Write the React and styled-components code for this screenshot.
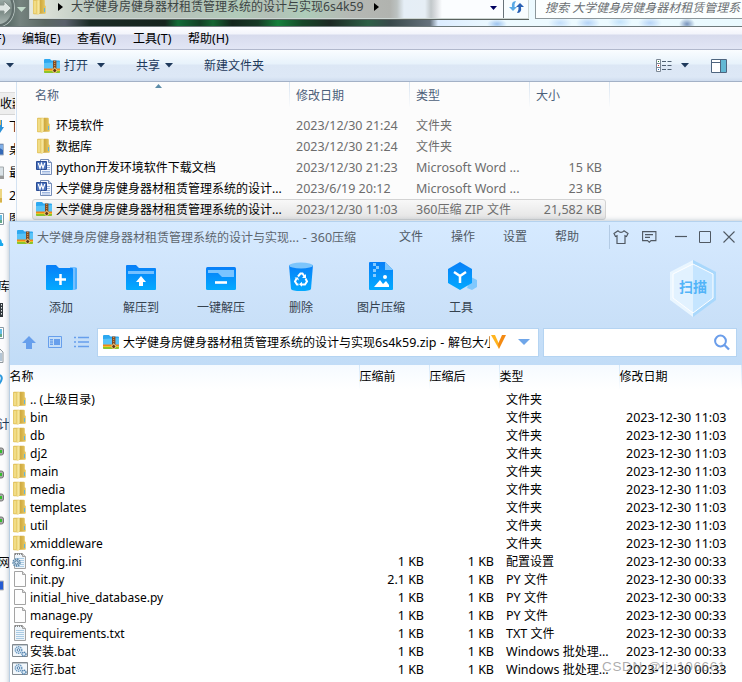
import React from "react";
import styled, { createGlobalStyle } from "styled-components";

const Global = createGlobalStyle`
  * { box-sizing: border-box; }
  body { margin: 0; overflow: hidden; background: #fcfcfc; }
  #root { font: 12px/18px "Noto Sans", "Noto Sans CJK SC", sans-serif; color: #000; }
  svg { display: block; flex: none; }
`;

const Latin = styled.span`font-size: ${(p) => p.$s}px;`;
const Mixed = ({ children, size = 12.5 }) =>
  String(children)
    .split(/([\u3400-\u9fff]+)/)
    .map((p, i) => (i % 2 ? <React.Fragment key={i}>{p}</React.Fragment> : p ? <Latin $s={size} key={i}>{p}</Latin> : null));

const Desktop = styled.div`
  position: relative; width: 742px; height: 682px; overflow: hidden; background: #fcfcfc;
`;
const Explorer = styled.div`display: flex; flex-direction: column; height: 682px;`;

/* glass title area */
const Glass = styled.div`
  height: 27px; flex: none; display: flex; align-items: flex-start; overflow: hidden;
  border-bottom: 1px solid #6f7a7c;
  background:
    radial-gradient(ellipse 10px 5px at 497px 24px, #9dc3ef 0, transparent 100%),
    radial-gradient(ellipse 12px 6px at 560px 23px, #c3defa 0, transparent 100%),
    radial-gradient(ellipse 12px 6px at 588px 23px, #b4d3f7 0, transparent 100%),
    radial-gradient(ellipse 12px 6px at 620px 22px, #c3e2fa 0, transparent 100%),
    radial-gradient(ellipse 12px 6px at 650px 23px, #b7d4f7 0, transparent 100%),
    radial-gradient(ellipse 8px 6px at 687px 24px, #7894bd 0, transparent 100%),
    linear-gradient(90deg, #475b56 0, #75837f 20px, #5b6863 45px, #59606b 65px, #1b2c25 90px, #16251f 165px, #126b37 178px, #143f26 200px, #156532 213px, #13251c 232px, #173a26 258px, #15803b 278px, #164829 302px, #1d2924 330px, #2e6046 368px, #39494b 390px, #66727d 430px, #dcecff 438px, #edfaff 500px, #eafaff 742px);
`;
const BackRound = styled.div`
  width: 30px; height: 36px; margin: -10px 0 0 -16px; flex: none; border-radius: 50%;
  border: 2px solid #5f6d6b; background: linear-gradient(#b7c7c3, #74847f 55%, #a9b6b2);
  box-shadow: 0 0 0 1px #b6c2bf; display: flex; align-items: center; justify-content: flex-end;
`;
const NavDrop = styled.div`
  width: 15px; height: 18px; flex: none; display: flex; align-items: center; justify-content: center;
`;
const AddressBar = styled.div`
  height: 19px; width: 500px; flex: none; display: flex; align-items: flex-start;
  border: 1px solid #cdd6d3; border-top: 0; box-shadow: 0 1px 0 #59615e; color: #3d4444;
  background: linear-gradient(90deg, #e6e9df 0, #bcc9c0 60px, #b6c2b9 150px, #b1cbb9 210px, #b4bfb6 240px, #aecdb9 275px, #b5b8b4 320px, #b1b3af 360px, #bcc2c1 367px, #e5eef6 374px, #e6eef5 395px, #c2c8ca 401px, #d6d9dc 405px, #fbfdff 412px);
`;
const Crumb = styled.div`line-height: 17px; margin-top: -2px; white-space: nowrap; flex: none;`;
const CrumbSlot = styled.div`width: ${(p) => p.$w}px; height: 14px; display: flex; align-items: center; justify-content: center; flex: none;`;
const HistoryDrop = styled.div`flex: 1; height: 15px; padding-right: 6px; display: flex; align-items: center; justify-content: flex-end;`;
const Refresh = styled.div`
  width: 25px; height: 18px; border-left: 1px solid #68737a; flex: none;
  display: flex; justify-content: center; background: #f8fdff;
`;
const FindBar = styled.div`
  margin-left: 6px; width: 222px; height: 19px; padding-left: 9px; flex: none; overflow: hidden;
  border: 1px solid #8c979b; border-top: 0; background: #fcffff; color: #6b7073;
  font-style: italic; line-height: 15px; white-space: nowrap;
`;
const MenuBar = styled.div`
  height: 23px; flex: none; border-bottom: 1px solid #b1b8cc; display: flex; align-items: center;
  background: linear-gradient(#fdfdff 0, #f2f4fb 7px, #d7dbed 8px, #e2e6f5 22px);
`;
const MenuItem = styled.div`width: ${(p) => p.$w}px; margin-left: ${(p) => p.$x || 0}px; flex: none; white-space: nowrap; line-height: 22px; padding-top: 1px;`;
const Toolbar = styled.div`
  height: 32px; flex: none; border-bottom: 1px solid #a3b1c6; display: flex; align-items: center; color: #1e395b;
  background: linear-gradient(#fafdff 0, #e7f2fb 14px, #dce7f5 15px, #dde8f6 27px, #cfdcee 31px);
`;
const ToolSlot = styled.div`width: ${(p) => p.$w}px; padding-left: ${(p) => p.$pl || 0}px; flex: none; display: flex; align-items: center; white-space: nowrap;`;
const Body = styled.div`flex: 1; display: flex; min-height: 0;`;
const NavPane = styled.div`
  width: 17px; flex: none; border-right: 1px solid #d3e2f2; overflow: hidden; background: #fcfcfd; padding-top: 10px;
`;
const NavHead = styled.div`
  height: 23px; line-height: 22px; white-space: nowrap; overflow: hidden; width: 15px;
  border-top: 1px solid #ddd; border-bottom: 1px solid #d5d5d5; background: #eee;
`;
const NavRow = styled.div`
  height: 23px; display: flex; align-items: center; margin-top: ${(p) => p.$gap || 0}px; width: 15px; overflow: hidden;
  svg { width: 9px; }
`;
const NavText = styled.div`
  width: 12px; flex: none; white-space: nowrap; margin-left: ${(p) => p.$x || 0}px; color: ${(p) => p.$c || "#000"};
`;
const FilePane = styled.div`flex: 1; min-width: 0; padding-left: 15px;`;
const FileHead = styled.div`
  height: 27px; display: grid; grid-template-columns: 258px 120px 120px 80px; color: #4c607a;
`;
const FileHeadCell = styled.div`
  height: 25px; line-height: 28px; padding-left: ${(p) => p.$pl || 6}px;
  border-right: 1px solid; border-image: linear-gradient(#d5e2f0, #fcfcfc) 1;
  position: relative;
`;
const SortMark = styled.div`position: absolute; left: 123px; top: 2px;`;
const FileRows = styled.div`padding-top: 6px;`;
const FileRow = styled.div`
  height: 21px; width: 574px; display: grid; grid-template-columns: 23px 240px 120px 110px 76px;
  line-height: 20px; color: #6d6d6d; border: 1px solid ${(p) => (p.$sel ? "#d3d3d3" : "transparent")}; border-radius: 3px;
  background: ${(p) => (p.$sel ? "linear-gradient(#f8f8f8,#e4e4e4)" : "none")};
  white-space: nowrap;
`;
const FileIcon = styled.div`padding: 1px 0 0 3px;`;
const FileName = styled.div`color: #000; width: 232px; height: 19px; overflow: hidden;`;
const Size = styled.div`text-align: right;`;

/* archive window */
const Archive = styled.div`
  position: absolute; left: 9px; top: 221px; width: 740px; height: 470px; background: #fff;
  border-left: 1px solid #b9cfe4; border-top: 1px solid #b5d2ee; box-shadow: 0 0 5px rgba(60,90,120,.4);
`;
const ArchiveTop = styled.div`
  height: 143px; background: linear-gradient(#d6eaff 0, #d0e5fc 45px, #c9e0f8 100px, #c1dcf7 143px);
`;
const TitleBar = styled.div`height: 30px; display: flex; color: #5d666f; white-space: nowrap;`;
const TitleIcon = styled.div`width: 27px; padding: 7px 0 0 7px; flex: none;`;
const TitleText = styled.div`width: 362px; line-height: 31px; flex: none; word-spacing: .5px;`;
const TitleMenu = styled.div`width: 52px; line-height: 29px; flex: none; color: #4f5964;`;
const TitleTools = styled.div`
  height: 24px; margin-top: 3px; margin-left: 2px; border-left: 1px solid #b3cbe5; display: flex; align-items: center;
`;
const TitleTool = styled.div`width: ${(p) => p.$w}px; flex: none;`;
const Actions = styled.div`height: 74px; display: flex; padding-left: 11px;`;
const Action = styled.div`
  width: 80px; flex: none; display: flex; flex-direction: column; align-items: center; padding-top: 10px; color: #35424f;
`;
const ActionLabel = styled.div`margin-top: 5px; line-height: 18px;`;
const ScanBadge = styled.div`margin: 5px 0 0 165px; position: relative; width: 54px; height: 64px;`;
const ScanText = styled.div`
  position: absolute; inset: 0; text-align: center; font: bold 14px/58px "Noto Sans CJK SC", sans-serif; color: #52b4f8;
`;
const AddressRow = styled.div`height: 30px; display: flex; align-items: center; margin-top: 1px;`;
const SmallTools = styled.div`width: 87px; flex: none; display: flex; gap: 12px; padding-left: 12px; align-items: center;`;
const PathBox = styled.div`
  width: 442px; height: 29px; border: 1px solid #b5d4f2; background: #fff; display: flex; align-items: center; padding-left: 5px; flex: none;
`;
const PathText = styled.div`width: 367px; margin-left: 4px; overflow: hidden; white-space: nowrap; flex: none; padding-top: 1px; word-spacing: .5px;`;
const PathDrop = styled.div`margin-left: 12px;`;
const FindBox = styled.div`
  width: 194px; height: 29px; margin-left: 4px; border: 1px solid #b5d4f2; background: #fff;
  display: flex; align-items: center; justify-content: flex-end; padding-right: 5px;
`;
const ListHead = styled.div`
  height: 24px; display: grid; grid-template-columns: 350px 70px 70px 120px 122px; line-height: 24px;
  background: linear-gradient(#f5faff, #fff);
`;
const ListHeadCell = styled.div`
  border-right: 1px solid; border-image: linear-gradient(#d0e6fa, #fff) 1; white-space: nowrap; text-indent: -.5px;
`;
const List = styled.div`padding-top: 2px;`;
const Item = styled.div`
  height: 18px; line-height: 18px; display: grid; grid-template-columns: 20px 314px 80px 70px 12px 120px 102px; white-space: nowrap;
`;
const ItemIcon = styled.div`padding-left: 2px;`;
const Right = styled.div`text-align: right;`;
const Watermark = styled.div`
  position: absolute; left: 602px; top: 658px; font: 13.5px/18px "Liberation Sans", sans-serif; letter-spacing: .65px; color: rgba(120,120,120,.62); white-space: nowrap;
`;

const Caret = ({ c = "#1e395b", w = 8, h = 4.5 }) => (
  <svg width={w} height={h}><path d={`M0 0H${w}L${w / 2} ${h}Z`} fill={c} /></svg>
);
const Play = () => <svg width="5" height="8"><path d="M0 0L5 4L0 8Z" fill="#000" /></svg>;

const Folder = () => (
  <svg width="16" height="16" viewBox="0 0 16 16">
    <defs>
      <linearGradient id="leaf"><stop offset="0" stopColor="#ecd271" /><stop offset=".6" stopColor="#f8eaa4" /><stop offset="1" stopColor="#cfa93c" /></linearGradient>
      <linearGradient id="back"><stop offset="0" stopColor="#c9a136" /><stop offset="1" stopColor="#e8ca66" /></linearGradient>
    </defs>
    <path d="M7 1.500q0-.7.8-.7h4q1 0 1 1v4.500l1 .7v7q0 .7-.8.7H7z" fill="url(#back)" />
    <path d="M1 1.800q0-1 1-1h5v14.400H2q-1 0-1-1z" fill="#dfbf5a" />
    <path d="M1.600 1.800h2.600v12.600H1.600z" fill="#f1dc85" />
    <path d="M4.400 1.600L8.600.9v12.500l-3 2.400-1.200-.8z" fill="url(#leaf)" />
    <path d="M12 9h1v4h-1z" fill="#63b4dc" />
  </svg>
);
const Zip = () => (
  <svg width="16" height="16" viewBox="0 0 16 16">
    <path d="M0 2q0-1 1-1h5l1.5 1.5H15q1 0 1 1V11H0z" fill="#2da8f0" /><path d="M0 5l16-1v7H0z" fill="#58c3f8" />
    <path d="M0 10.5h16V13H0z" fill="#f28618" /><path d="M0 12.5h16v1.7q0 .8-.8.8H.8q-.8 0-.8-.8z" fill="#8cc42a" /><path d="M0 12h16v1H0z" fill="#ecc228" />
    <path d="M9 2.5h3.4V13H9z" fill="#824b24" /><path d="M10.7 3v8" stroke="#e3a356" strokeDasharray="1 1" />
    <circle cx="10.7" cy="12.5" r="2" fill="#5b3515" stroke="#f7ce80" />
  </svg>
);
const Word = () => (
  <svg width="17" height="16" viewBox="0 0 17 16">
    <path d="M4.5.5h8l3 3v12h-11z" fill="#f4f8ff" stroke="#758db8" /><path d="M12.5.5v3h3" fill="#cbd8ef" stroke="#758db8" />
    <path d="M6 12.5h8M6 14h8M11 6.5h3M11 8.5h3M11 10.5h3" stroke="#9db5dd" />
    <path d="M.5 2.5h10v8H.5z" fill="#4a72bd" stroke="#2a4b93" /><path d="M2.3 4L4 9L5.5 4.5L7 9L8.8 4" fill="none" stroke="#fff" strokeWidth="1.2" />
  </svg>
);
const Page = ({ kind }) => (
  <svg width="16" height="16" viewBox="0 0 16 16">
    <path d="M2.5.5h8l3 3v12h-11z" fill={kind ? "#eef5fb" : "#fdfdfd"} stroke="#a3a3a3" /><path d="M10.5.5v3h3" fill="#ddd" stroke="#a3a3a3" />
    {kind && <path d="M4 5.5h8M4 7.5h8M4 9.5h8M4 11.5h8M4 13.5h8" stroke="#aacbe3" />}
    {kind && <path d="M3 1h8" stroke="#888" strokeDasharray="1 1" strokeWidth="2" />}
    {kind === "ini" && <><circle cx="4.5" cy="9.5" r="3.4" fill="#d5e8f5" stroke="#5c86a8" strokeWidth="1.7" strokeDasharray="1.5 .8" /><circle cx="4.5" cy="9.5" r="1.8" fill="none" stroke="#496f91" /></>}
  </svg>
);
const Bat = () => (
  <svg width="16" height="16" viewBox="0 0 16 16">
    <path d="M.5 1.5h15v12H.5z" fill="#f2f7fb" stroke="#82898f" /><path d="M1 2.5h14" stroke="#c0cad1" />
    <circle cx="6.5" cy="7" r="3.3" fill="#e0eef8" stroke="#6c98bf" strokeWidth="1.4" strokeDasharray="1.4 .7" /><circle cx="6.5" cy="7" r="1.3" fill="#fff" stroke="#4d7cab" />
    <circle cx="12" cy="11.2" r="2" fill="#dceaf5" stroke="#477aa9" strokeWidth="1.3" strokeDasharray="1.2 .5" />
  </svg>
);
const Gradient = () => (
  <defs><linearGradient id="blue" x1="0" y1="0" x2="0" y2="1"><stop offset="0" stopColor="#087ff8" /><stop offset="1" stopColor="#03aaff" /></linearGradient></defs>
);
const actionArt = {
  add: <><path d="M25 4h5q2 0 2 2v19q0 2-2 2h-5z" fill="#75bfff" /><path d="M1 3q0-1 1-1h9l3 3h13q1 0 1 1v20q0 1-1 1H2q-1 0-1-1z" fill="url(#blue)" /><path d="M31 5v21" stroke="#249bfb" strokeWidth="1" /><path d="M15.5 11v11M10 16.5h11" stroke="#fff" strokeWidth="2.5" /></>,
  out: <><path d="M1 3q0-1 1-1h9l3 3h16q1 0 1 1v20q0 1-1 1H2q-1 0-1-1z" fill="url(#blue)" /><path d="M3 8h26v3H3z" fill="#74c0ff" /><path d="M16 13l5 6h-3v4h-4v-4h-3z" fill="#fff" /></>,
  one: <><rect x="1" y="4" width="30" height="23" rx="1.5" fill="url(#blue)" /><path d="M3 7h26v7H17l-4-4H3z" fill="#7ac4ff" /><path d="M10 19.5h12" stroke="#fff" strokeWidth="2.6" /></>,
  del: <><path d="M4 2h24l-2 24q-1 2-10 2T6 26z" fill="url(#blue)" /><ellipse cx="16" cy="2.5" rx="12" ry="3" fill="#7cc5fc" /><g fill="none" stroke="#fff" strokeWidth="2"><path d="M13 13.5l2.5-3h2l2 3M20.5 15.5l1.5 3-2 3h-3M13.5 21.5H12l-2-3 1.5-3" /></g><path d="M21 11v4h-4zM17 18.7v5l-3-2.4zM9.5 14.5l3.5 0 1 3z" fill="#fff" /></>,
  img: <><path d="M5-1h15l8 8v19q0 1-1 1H5q-1 0-1-1V0q0-1 1-1z" fill="url(#blue)" /><path d="M20-1v8h8z" fill="#7dc6ff" /><path d="M8 0h3v3H8zM11 3h3v3h-3zM8 6h3v3H8zM8 11h3v3H8z" fill="#86cbff" /><path d="M9 24l6-7 3 4 3-3 3 4v2z" fill="#fff" /><circle cx="20" cy="14" r="2" fill="#fff" /></>,
  hex: <><path d="M26 14l6 3v7l-5 3-5-2z" fill="#80c8fd" /><path d="M15-1l12 7v14l-12 7-12-7V6z" fill="url(#blue)" /><path d="M9 9l6 4 6-4M15 13v7" fill="none" stroke="#fff" strokeWidth="2.5" /></>,
};
const ActionIcon = ({ kind }) => (
  <svg width="32" height="32" viewBox="0 -1 32 32" overflow="visible"><Gradient />{actionArt[kind]}</svg>
);
const Glyph = ({ w, h = w, c = "#505963", children }) => (
  <svg width={w} height={h} viewBox={`0 0 ${w} ${h}`} fill="none" stroke={c}>{children}</svg>
);

const files = [
  [Folder, "环境软件", "2023/12/30 21:24", "文件夹", ""],
  [Folder, "数据库", "2023/12/30 21:24", "文件夹", ""],
  [Word, "python开发环境软件下载文档", "2023/12/30 21:23", "Microsoft Word ...", "15 KB"],
  [Word, "大学健身房健身器材租赁管理系统的设计...", "2023/6/19 20:12", "Microsoft Word ...", "23 KB"],
  [Zip, "大学健身房健身器材租赁管理系统的设计...", "2023/12/30 11:03", "360压缩 ZIP 文件", "21,582 KB"],
];
const items = [
  ["dir", ".. (上级目录)", "", "", "文件夹", ""],
  ...["bin", "db", "dj2", "main", "media", "templates", "util", "xmiddleware"].map((n) => ["dir", n, "", "", "文件夹", "2023-12-30 11:03"]),
  ["ini", "config.ini", "1 KB", "1 KB", "配置设置", "2023-12-30 00:33"],
  ["py", "init.py", "2.1 KB", "1 KB", "PY 文件", "2023-12-30 00:33"],
  ["py", "initial_hive_database.py", "1 KB", "1 KB", "PY 文件", "2023-12-30 00:33"],
  ["py", "manage.py", "1 KB", "1 KB", "PY 文件", "2023-12-30 00:33"],
  ["txt", "requirements.txt", "1 KB", "1 KB", "TXT 文件", "2023-12-30 00:33"],
  ["bat", "安装.bat", "1 KB", "1 KB", "Windows 批处理...", "2023-12-30 00:33"],
  ["bat", "运行.bat", "1 KB", "1 KB", "Windows 批处理...", "2023-12-30 00:33"],
];
const itemIcons = { dir: <Folder />, ini: <Page kind="ini" />, py: <Page />, txt: <Page kind="txt" />, bat: <Bat /> };
const actions = [["add", "添加"], ["out", "解压到"], ["one", "一键解压"], ["del", "删除"], ["img", "图片压缩"], ["hex", "工具"]];

const navArt = {
  down: <><path d="M-4 1h6v9h-6z" fill="#dfb760" /><path d="M-2 6h3V1h1v7h2l-4 6-5-6z" fill="#2b91d7" /></>,
  desk: <><path d="M-5 2H3.5v11H-5z" fill="#3569b7" stroke="#a8b4c4" /><path d="M-5 3h8v5z" fill="#7faee6" /></>,
  recent: <><path d="M-4 2H3.5v9H-4z" fill="#d9e1e6" stroke="#a4aaad" /><path d="M-4 11h8v3h-8z" fill="#999" /></>,
  folder: <><path d="M-4 1h6v14h-6z" fill="#ecd582" /><path d="M0 10h2v4H0z" fill="#d6b14c" /></>,
  pic: <><path d="M-4 2.5H3.5v11H-4z" fill="#fff" stroke="#899aa5" /><path d="M-3 4h5v5h-5z" fill="#65bde4" /><path d="M-3 9h5v3h-5z" fill="#62a98a" /></>,
  cloud: <path d="M-7 12q0-8 5-8 4 1 4 5 2 0 1 3z" fill="#1aa8ec" />,
  film: <><path d="M-4 1h7v14h-7z" fill="#30373b" /><path d="M1.5 2v12" stroke="#e0e6e8" strokeDasharray="1.5 1.5" /></>,
  doc: <><path d="M-5 1H0l3 3v10.5h-8z" fill="#f1f4f7" stroke="#8f979c" /><path d="M-3 6h5M-3 8h5M-3 10h5M-3 12h5" stroke="#7697b4" /></>,
  music: <path d="M0 4q3 2 1 6l-3 5" fill="none" stroke="#2a98dd" strokeWidth="2" />,
  disk: <><rect x="-8" y="4" width="11.5" height="7" rx="2" fill="#aaa" stroke="#777" /><path d="M-1 6h3v3h-3z" fill="#35bd2d" /></>,
  monitor: <path d="M-6 3H3.5v9H-6z" fill="#255bd2" stroke="#b4b4b4" />,
};
const NavIcon = ({ k }) => <svg width="9" height="16" viewBox="0 0 9 16">{navArt[k]}</svg>;

export default function App() {
  return (
    <Desktop>
      <Global />
      <Explorer>
        <Glass>
          <BackRound><svg width="13" height="16" viewBox="0 0 13 16"><path d="M0 5h5V1l7 7-7 7v-4H0z" fill="#dce4e1" stroke="#87938f" /></svg></BackRound>
          <NavDrop><Caret c="#c0d9c9" w={9} h={5} /></NavDrop>
          <AddressBar>
            <CrumbSlot $w={20}><Folder /></CrumbSlot>
            <CrumbSlot $w={21}><Play /></CrumbSlot>
            <Crumb><Mixed size={12.3}>大学健身房健身器材租赁管理系统的设计与实现6s4k59</Mixed></Crumb>
            <CrumbSlot $w={26}><Play /></CrumbSlot>
            <HistoryDrop><Caret c="#000060" w={7} h={4} /></HistoryDrop>
            <Refresh>
              <Glyph w={15} h={15} c="none"><path d="M7 1Q2 1 3 7H0l4 4 4-4H5.5Q5 4 7 1z" fill="#58a9e5" /><path d="M8 13q5 0 4-6h3l-4-4-4 4h2.5Q10 10 8 13z" fill="#2860b4" /></Glyph>
            </Refresh>
          </AddressBar>
          <FindBar><Mixed>搜索 大学健身房健身器材租赁管理系</Mixed></FindBar>
        </Glass>
        <MenuBar>
          <MenuItem $w={27} $x={-5}><Mixed>F)</Mixed></MenuItem>
          <MenuItem $w={55}><Mixed>编辑(E)</Mixed></MenuItem>
          <MenuItem $w={56}><Mixed>查看(V)</Mixed></MenuItem>
          <MenuItem $w={55}><Mixed>工具(T)</Mixed></MenuItem>
          <MenuItem $w={60}><Mixed>帮助(H)</Mixed></MenuItem>
        </MenuBar>
        <Toolbar>
          <ToolSlot $w={44} $pl={6}><Caret /></ToolSlot>
          <ToolSlot $w={20}><Zip /></ToolSlot>
          <ToolSlot $w={33}>打开</ToolSlot>
          <ToolSlot $w={39}><Caret /></ToolSlot>
          <ToolSlot $w={29}>共享</ToolSlot>
          <ToolSlot $w={39}><Caret /></ToolSlot>
          <ToolSlot $w={452}>新建文件夹</ToolSlot>
          <ToolSlot $w={25}>
            <Glyph w={16} h={13} c="#7b8794"><path d="M.5.5h4v12h-4zM.5 4.5h4M.5 8.5h4" fill="#fff" /><path d="M6 2.5h4M11.5 2.5h4M6 6.5h4M11.5 6.5h4M6 10.5h4M11.5 10.5h4" stroke="#4f6073" /><path d="M2 2.5h1" stroke="#2c8a3a" /><path d="M2 6.5h1" stroke="#d22" /><path d="M2 10.5h1" stroke="#27c" /></Glyph>
          </ToolSlot>
          <ToolSlot $w={30}><Caret /></ToolSlot>
          <Glyph w={16} h={14} c="#4e657f"><path d="M.5.5h15v13H.5z" fill="#fff" /><path d="M10 1h5v12h-5z" fill="#62b8d4" stroke="none" /><path d="M.5 3.5h9M9.5 1v13" /></Glyph>
        </Toolbar>
        <Body>
          <NavPane>
            <NavHead>收藏</NavHead>
            <NavRow><NavIcon k="down" /><NavText>下</NavText></NavRow>
            <NavRow><NavIcon k="desk" /><NavText>桌</NavText></NavRow>
            <NavRow><NavIcon k="recent" /><NavText>最</NavText></NavRow>
            <NavRow><NavIcon k="folder" /><NavText><Mixed>2</Mixed></NavText></NavRow>
            <NavRow><NavIcon k="pic" /><NavText>图</NavText></NavRow>
            <NavRow><NavIcon k="cloud" /></NavRow>
            <NavRow $gap={22}><NavText $x={-2}>库</NavText></NavRow>
            <NavRow><NavIcon k="film" /></NavRow>
            <NavRow><NavIcon k="pic" /></NavRow>
            <NavRow><NavIcon k="doc" /></NavRow>
            <NavRow><NavIcon k="music" /></NavRow>
            <NavRow $gap={23}><NavText $x={-2} $c="#1e395b">计</NavText></NavRow>
            <NavRow $gap={4}><NavIcon k="disk" /></NavRow>
            <NavRow><NavIcon k="disk" /></NavRow>
            <NavRow><NavIcon k="disk" /></NavRow>
            <NavRow><NavIcon k="disk" /></NavRow>
            <NavRow $gap={19}><NavText $x={-2}>网</NavText></NavRow>
            <NavRow><NavIcon k="monitor" /></NavRow>
          </NavPane>
          <FilePane>
            <FileHead>
              <FileHeadCell $pl={3}>名称<SortMark><svg width="7" height="4"><path d="M0 4L3.5 0L7 4Z" fill="#5c8ca8" /></svg></SortMark></FileHeadCell>
              <FileHeadCell>修改日期</FileHeadCell><FileHeadCell>类型</FileHeadCell><FileHeadCell>大小</FileHeadCell>
            </FileHead>
            <FileRows>
              {files.map(([Icon, name, date, type, size], i) => (
                <FileRow key={i} $sel={i === 4}>
                  <FileIcon><Icon /></FileIcon>
                  <FileName><Mixed size={12}>{name}</Mixed></FileName>
                  <div><Mixed>{date}</Mixed></div>
                  <div><Mixed>{type}</Mixed></div>
                  <Size><Mixed>{size}</Mixed></Size>
                </FileRow>
              ))}
            </FileRows>
          </FilePane>
        </Body>
      </Explorer>

      <Archive>
        <ArchiveTop>
          <TitleBar>
            <TitleIcon><Zip /></TitleIcon>
            <TitleText><Mixed>大学健身房健身器材租赁管理系统的设计与实现... - 360压缩</Mixed></TitleText>
            {["文件", "操作", "设置", "帮助"].map((t) => <TitleMenu key={t}>{t}</TitleMenu>)}
            <TitleTools>
              <TitleTool $w={3} />
              <TitleTool $w={29}><Glyph w={16} h={14}><path d="M5 .8L1 3.5l1.5 3L4 5.8v7.7h8V5.8l1.5.7 1.5-3L11 .8Q8 4 5 .8z" strokeWidth="1.2" /></Glyph></TitleTool>
              <TitleTool $w={33}><Glyph w={15} h={12}><path d="M.6.6h13.3v9H9L7.3 11.3 5.6 9.6H.6zM3 3.6h8M3 6.4h5" strokeWidth="1.1" /></Glyph></TitleTool>
              <TitleTool $w={24}><Glyph w={12} h={12}><path d="M0 5.5h12" strokeWidth="1.2" /></Glyph></TitleTool>
              <TitleTool $w={24}><Glyph w={12} h={12}><path d="M.5.5h11v11H.5z" /></Glyph></TitleTool>
              <TitleTool $w={14}><Glyph w={12} h={12}><path d="M.5.5l11 11M11.5.5l-11 11" strokeWidth="1.1" /></Glyph></TitleTool>
            </TitleTools>
          </TitleBar>
          <Actions>
            {actions.map(([k, label]) => (
              <Action key={k}><ActionIcon kind={k} /><ActionLabel>{label}</ActionLabel></Action>
            ))}
            <ScanBadge>
              <svg width="54" height="64" viewBox="0 0 54 64">
                <path d="M27 3L50 15v28L27 60 4 43V15z" fill="#c5e2ff" />
                <path d="M27 3L50 15v28L27 60z" fill="#a9d8fc" />
                <path d="M27 3L4 15v28L27 60z" fill="#eaf6ff" />
                <path d="M27 7L47 17v24L27 56z" fill="#c5e5ff" />
                <path d="M27 7L7 17v24L27 56z" fill="#e2f2ff" />
                <path d="M27 7L47 17v24L27 56L7 41V17z" fill="none" stroke="#fff" />
              </svg>
              <ScanText>扫描</ScanText>
            </ScanBadge>
          </Actions>
          <AddressRow>
            <SmallTools>
              <Glyph w={14} h={13} c="none"><path d="M7 0l7 7h-4v6H4V7H0z" fill="#679fec" /></Glyph>
              <Glyph w={14} h={12} c="#679fec"><path d="M.5.5h13v11H.5z" /><path d="M6 3h6v6H6zM2 3h3v1.5H2zM2 5.3h3v1.5H2zM2 7.6h3V9H2z" fill="#679fec" stroke="none" /></Glyph>
              <Glyph w={15} h={12} c="#679fec"><path d="M0 1.5h2M4 1.5h11M0 6h2M4 6h11M0 10.5h2M4 10.5h11" strokeWidth="1.6" /></Glyph>
            </SmallTools>
            <PathBox>
              <Zip /><PathText><Mixed>大学健身房健身器材租赁管理系统的设计与实现6s4k59.zip - 解包大小</Mixed></PathText>
              <Glyph w={16} h={14} c="none"><path d="M1 0h4l4 9v5z" fill="#ffb51f" /><path d="M16 0h-4L8 9l1 5z" fill="#f48a13" /></Glyph>
              <PathDrop><Caret c="#6fa6e9" w={12} h={6} /></PathDrop>
            </PathBox>
            <FindBox><Glyph w={18} h={17} c="#6a9dea"><circle cx="7.5" cy="7" r="5.4" strokeWidth="2" /><path d="M11.5 11l4.5 4.5" strokeWidth="2.3" /></Glyph></FindBox>
          </AddressRow>
        </ArchiveTop>
        <ListHead>
          {["名称", "压缩前", "压缩后", "类型", "修改日期"].map((t) => <ListHeadCell key={t}>{t}</ListHeadCell>)}
        </ListHead>
        <List>
          {items.map(([kind, name, a, b, type, date], i) => (
            <Item key={i}>
              <ItemIcon>{itemIcons[kind]}</ItemIcon>
              <div><Mixed size={12}>{name}</Mixed></div>
              <Right><Mixed>{a}</Mixed></Right>
              <Right><Mixed>{b}</Mixed></Right>
              <div />
              <div><Mixed>{type}</Mixed></div>
              <div><Mixed>{date}</Mixed></div>
            </Item>
          ))}
        </List>
      </Archive>
      <Watermark>CSDN @liu106661</Watermark>
    </Desktop>
  );
}
